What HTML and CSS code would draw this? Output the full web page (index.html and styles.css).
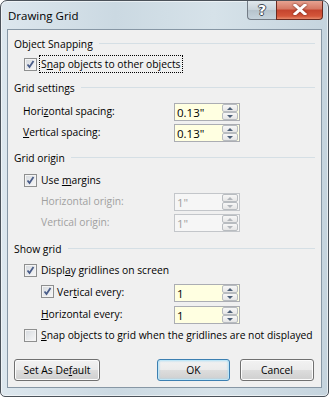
FILE: index.html
```html
<!DOCTYPE html>
<html lang="en">
<head>
  <meta charset="UTF-8">
  <title>Drawing Grid</title>
  <link rel="stylesheet" href="styles.css">
</head>
<body>

  <div class="window">
    <div class="titlebar">
      <span class="title">Drawing Grid</span>
      <div class="caption-btns">
        <span class="cap help">?</span>
        <span class="cap close">
          <svg width="14" height="11" viewBox="0 0 14 11">
            <path d="M2 1 L12 10 M12 1 L2 10" stroke="#fff" stroke-width="3" stroke-linecap="square" fill="none"/>
          </svg>
        </span>
      </div>
    </div>

    <div class="client">
      <!-- Object Snapping -->
      <div class="group-head"><span>Object Snapping</span></div>
      <div class="row lvl1">
        <span class="check on"></span>
        <span class="lbl focus">S<u>n</u>ap objects to other objects</span>
      </div>

      <!-- Grid settings -->
      <div class="group-head gap4"><span>Grid settings</span></div>
      <div class="field lvl1a gap3">
        <span class="lbl">Hori<u>z</u>ontal spacing:</span>
        <span class="spinbox"><span class="val">0.13"</span><span class="spin"><i class="up"></i><i class="down"></i></span></span>
      </div>
      <div class="field lvl1a">
        <span class="lbl"><u>V</u>ertical spacing:</span>
        <span class="spinbox"><span class="val">0.13"</span><span class="spin"><i class="up"></i><i class="down"></i></span></span>
      </div>

      <!-- Grid origin -->
      <div class="group-head gap5"><span>Grid origin</span></div>
      <div class="row lvl1 gap2">
        <span class="check on"></span>
        <span class="lbl">Use <u>m</u>argins</span>
      </div>
      <div class="field lvl2 gap1 disabled">
        <span class="lbl">Horizontal origin:</span>
        <span class="spinbox"><span class="val">1"</span><span class="spin"><i class="up"></i><i class="down"></i></span></span>
      </div>
      <div class="field lvl2 disabled">
        <span class="lbl">Vertical origin:</span>
        <span class="spinbox"><span class="val">1"</span><span class="spin"><i class="up"></i><i class="down"></i></span></span>
      </div>

      <!-- Show grid -->
      <div class="group-head gap6"><span>Show grid</span></div>
      <div class="row lvl1 gap1">
        <span class="check on"></span>
        <span class="lbl">Displ<u>a</u>y gridlines on screen</span>
      </div>
      <div class="field lvl2c gap2">
        <span class="check on"></span>
        <span class="lbl">Ver<u>t</u>ical every:</span>
        <span class="spinbox"><span class="val">1</span><span class="spin"><i class="up"></i><i class="down"></i></span></span>
      </div>
      <div class="field lvl2 gap1">
        <span class="lbl"><u>H</u>orizontal every:</span>
        <span class="spinbox"><span class="val">1</span><span class="spin"><i class="up"></i><i class="down"></i></span></span>
      </div>
      <div class="row lvl1">
        <span class="check"></span>
        <span class="lbl"><u>S</u>nap objects to grid when the gridlines are not displayed</span>
      </div>

      <div class="buttons">
        <button class="btn wide">Set As De<u>f</u>ault</button>
        <button class="btn default">OK</button>
        <button class="btn">Cancel</button>
      </div>
    </div>
  </div>

</body>
</html>
```

FILE: styles.css
```css
body {
  margin: 0;
  font-family: "Open Sans", "Liberation Sans", sans-serif;
  font-size: 10.3px;
  color: #000;
}

.window {
  width: 329px;
  height: 397px;
  box-sizing: border-box;
  border: 1px solid #4b525a;
  border-radius: 7px 7px 5px 5px;
  background: linear-gradient(to right, #dde7ee 0%, #cbd9e2 35%, #d6e2e9 65%, #c5d4de 100%);
  box-shadow: inset 0 0 0 1px rgba(255, 255, 255, 0.55);
  display: flex;
  flex-direction: column;
  overflow: hidden;
}

.titlebar {
  height: 28px;
  display: flex;
  justify-content: space-between;
  align-items: flex-start;
  padding-left: 7px;
}

.title {
  font-size: 11.5px;
  line-height: 29px;
}

.caption-btns {
  display: flex;
  margin-top: -1px;
  margin-right: 5px;
}

.cap {
  height: 20px;
  box-sizing: border-box;
  border: 1px solid #737c86;
  border-top: none;
  display: flex;
  align-items: center;
  justify-content: center;
}

.help {
  width: 29px;
  border-right: none;
  border-radius: 0 0 0 4px;
  background: linear-gradient(#e2e9ee, #c9d3da 50%, #b5c2cb 51%, #c6d3dc);
  color: #fff;
  font-family: "DejaVu Sans", sans-serif;
  font-weight: bold;
  font-size: 14px;
  line-height: 18px;
  text-shadow: 1px 0 0 #3f4a55, -1px 0 0 #3f4a55, 0 1px 0 #3f4a55, 0 -1px 0 #3f4a55;
}

.close {
  width: 47px;
  border-color: #6a2a1f;
  border-radius: 0 0 4px 0;
  background: linear-gradient(#e9a897, #d67a66 45%, #c5452f 55%, #d4563a 85%, #e58a6c);
}

.close svg {
  filter: drop-shadow(0 0 1px #6b2014);
}

.client {
  flex: 1;
  margin: 0 6px 8px 6px;
  border: 1px solid #8797a5;
  background: #f0f0f0;
  padding: 4px 6px 0 6px;
}

.gap1 { margin-top: 1px; }
.gap2 { margin-top: 2px; }
.gap3 { margin-top: 3px; }
.gap4 { margin-top: 4px; }
.gap5 { margin-top: 5px; }
.gap6 { margin-top: 6px; }

.group-head {
  height: 20px;
  display: flex;
  align-items: center;
}

.group-head::after {
  content: "";
  flex: 1;
  height: 1px;
  background: #d5dfe5;
  margin-left: 6px;
  margin-top: -1px;
}

.row {
  height: 20px;
  display: flex;
  align-items: center;
}

.lvl1 { padding-left: 10px; }
.lvl1a { padding-left: 8px; }
.lvl2 { padding-left: 26px; }
.lvl2c { padding-left: 27px; }

.check {
  width: 13px;
  height: 13px;
  box-sizing: border-box;
  border: 1px solid #8e8f8f;
  background: linear-gradient(135deg, #d5d9de, #f8f8f8);
  box-shadow: inset 0 0 0 1px #f4f4f4;
  margin-right: 2px;
  flex: none;
}

.check.on {
  background: url("data:image/svg+xml,%3Csvg xmlns='http://www.w3.org/2000/svg' width='11' height='11'%3E%3Cpath d='M2.5 5.5 L4.5 8 L8.5 2' stroke='%234a5d89' stroke-width='1.8' fill='none'/%3E%3C/svg%3E") center no-repeat,
    linear-gradient(135deg, #d5d9de, #f8f8f8);
}

.lbl {
  padding: 0 1px;
  border: 1px solid transparent;
  line-height: 16px;
  white-space: nowrap;
}

.focus {
  border: 1px dotted #000;
}

.field {
  height: 21px;
  display: flex;
  align-items: flex-start;
}

.field .lbl {
  margin-top: 1px;
  padding: 0;
}

.field .check {
  margin-top: 3px;
}

.spinbox {
  margin-left: auto;
  margin-right: 75px;
  margin-top: 2px;
  width: 66px;
  height: 18px;
  box-sizing: border-box;
  border: 1px solid #abadb3;
  background: #ffffe1;
  display: flex;
  align-items: center;
  justify-content: space-between;
  padding-left: 2px;
  padding-right: 1px;
}

.val {
  font-size: 11.5px;
}

.spin {
  width: 16px;
  height: 16px;
  display: flex;
  flex-direction: column;
}

.spin i {
  flex: 1;
  box-sizing: border-box;
  border: 1px solid #b8bcc0;
  border-radius: 2px;
  background: linear-gradient(#f7f7f7, #e6e6e6);
  display: flex;
  align-items: center;
  justify-content: center;
}

.spin i::before {
  content: "";
  border-left: 3px solid transparent;
  border-right: 3px solid transparent;
}

.spin .up::before {
  border-bottom: 3px solid #4d6078;
}

.spin .down::before {
  border-top: 3px solid #4d6078;
}

.disabled .lbl,
.disabled .val {
  color: #a0a0a0;
}

.disabled .spinbox {
  background: #f6f6f6;
  border-color: #c3c6ca;
}

.disabled .spin i::before {
  border-bottom-color: #b2b6bb;
  border-top-color: #b2b6bb;
}

.disabled .spin .up::before {
  border-top-color: transparent;
}

.disabled .spin .down::before {
  border-bottom-color: transparent;
}

.buttons {
  display: flex;
  margin-top: 14px;
  padding-right: 1px;
}

.btn {
  font-family: inherit;
  font-size: inherit;
  color: #000;
  height: 22px;
  width: 74px;
  border: 1px solid #707070;
  border-radius: 3px;
  background: linear-gradient(#f2f2f2, #ebebeb 50%, #dddddd 51%, #cfcfcf);
  box-shadow: inset 0 0 0 1px #fcfcfc;
  padding: 0;
}

.btn.wide {
  width: 86px;
  margin-right: auto;
}

.btn.default {
  width: 73px;
  margin-right: 10px;
  border-color: #3c7fb1;
  box-shadow: inset 0 0 0 1px #bfe6f7, inset 0 0 2px 1px #9fd5ee;
}
```
